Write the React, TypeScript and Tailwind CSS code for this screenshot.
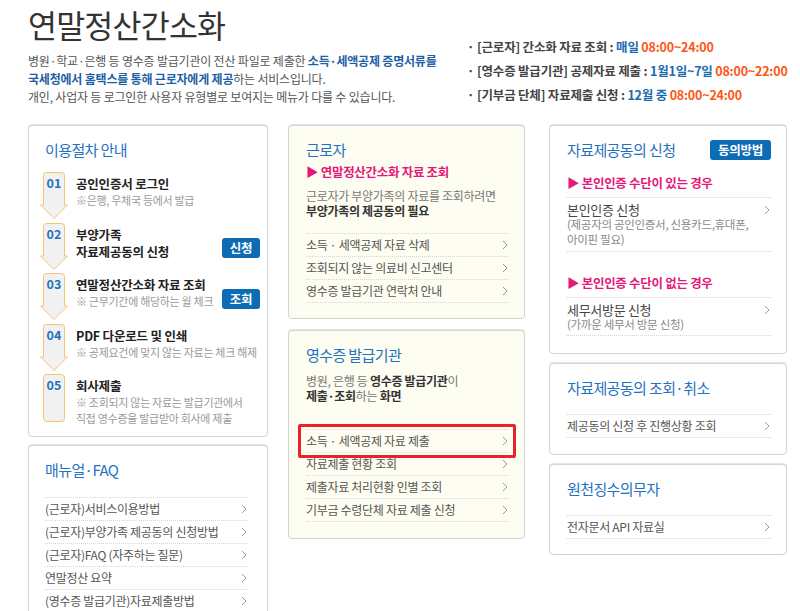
import React from "react";

const Chevron = () => (
  <svg width="6" height="10" viewBox="0 0 6 10" className="shrink-0">
    <path d="M1 1 L5 5 L1 9" fill="none" stroke="#9a9a9a" strokeWidth="1" />
  </svg>
);

function LinkList({ items, highlightFirst }: { items: string[]; highlightFirst?: boolean }) {
  return (
    <div className="border-b border-dotted border-[#d6d6d6]">
      {items.map((t, i) => (
        <div
          key={t}
          className="relative flex h-[23px] items-center justify-between border-t border-dotted border-[#d6d6d6] text-[12px] tracking-[-0.3px] text-[#555]"
        >
          <span className="whitespace-nowrap">{t}</span>
          <span className="mr-[1px]">
            <Chevron />
          </span>
          {highlightFirst && i === 0 && (
            <div className="pointer-events-none absolute -left-[8px] -right-[7px] -top-[6px] -bottom-[6px] rounded-[2px] border-[3px] border-[#e8232b]" />
          )}
        </div>
      ))}
    </div>
  );
}

const Title = ({ children }: { children: React.ReactNode }) => (
  <h2 className="whitespace-nowrap text-[15px] leading-[24px] tracking-[-0.6px] text-[#1f72bf]">{children}</h2>
);

const Badge = ({ children, w }: { children: React.ReactNode; w: string }) => (
  <span
    className={`${w} inline-block h-[20px] rounded-[3px] bg-[#0c6cb6] text-center text-[12.5px] font-bold leading-[20px] tracking-[-0.3px] text-white`}
  >
    {children}
  </span>
);

type Step = { n: string; title: string[]; sub: string[]; badge?: string; last?: boolean };

const steps: Step[] = [
  { n: "01", title: ["공인인증서 로그인"], sub: ["※은행, 우체국 등에서 발급"] },
  { n: "02", title: ["부양가족", "자료제공동의 신청"], sub: [], badge: "신청" },
  { n: "03", title: ["연말정산간소화 자료 조회"], sub: ["※ 근무기간에 해당하는 월 체크"], badge: "조회" },
  { n: "04", title: ["PDF 다운로드 및 인쇄"], sub: ["※ 공제요건에 맞지 않는 자료는 체크 해제"] },
  {
    n: "05",
    title: ["회사제출"],
    sub: ["※ 조회되지 않는 자료는 발급기관에서", "직접 영수증을 발급받아 회사에 제출"],
    last: true,
  },
];

function StepRow({ s }: { s: Step }) {
  return (
    <div className={`flex ${s.last ? "" : "h-[50.5px]"}`}>
      <div className={`relative ml-[-5px] w-[28px] shrink-0 ${s.last ? "h-[48px]" : "h-[47px]"}`}>
        {s.last ? (
          <svg width="28" height="48" viewBox="0 0 28 48" className="absolute left-0 top-0">
            <rect x="3.5" y="0.5" width="21" height="47" rx="3" fill="#f1f1f1" stroke="#f6c172" strokeWidth="1" />
          </svg>
        ) : (
          <svg width="28" height="47" viewBox="0 0 28 47" className="absolute left-0 top-0">
            <path
              d="M3.5 3.5 Q3.5 0.5 6.5 0.5 L21.5 0.5 Q24.5 0.5 24.5 3.5 L24.5 33 L27.5 33 L14 46.5 L0.5 33 L3.5 33 Z"
              fill="#f1f1f1"
              stroke="#f6c172"
              strokeWidth="1"
            />
          </svg>
        )}
        <span className="absolute left-0 top-[3px] w-[28px] text-center text-[12.5px] font-bold leading-[16px] text-[#1f72bf]">
          {s.n}
        </span>
      </div>
      <div className="ml-[8px] pt-[3px]">
        {s.title.map((t) => (
          <div key={t} className="whitespace-nowrap text-[12.5px] font-bold leading-[17px] tracking-[-0.2px] text-[#222]">
            {t}
          </div>
        ))}
        {s.sub.map((t) => (
          <div key={t} className="whitespace-nowrap text-[11px] leading-[16px] tracking-[-0.3px] text-[#9a9a9a]">
            {t}
          </div>
        ))}
      </div>
      {s.badge && (
        <div className="ml-auto mb-[3px] self-center">
          <Badge w="w-[38px]">{s.badge}</Badge>
        </div>
      )}
    </div>
  );
}

const panel = "rounded-[4px] border border-[#d4d4d4] shadow-[0_-1px_0_#e6e6e6]";
const pink = "whitespace-nowrap text-[12.5px] font-bold leading-[18px] tracking-[-0.3px] text-[#e5177b]";
const desc = "whitespace-nowrap text-[12px] leading-[14.5px] tracking-[-0.3px] text-[#777]";

export default function App() {
  return (
    <div className="h-[611px] w-full overflow-hidden bg-white font-['Noto_Sans_CJK_KR','Noto_Sans',sans-serif]">
      {/* Header */}
      <div className="flex h-[125px] pl-[28px]">
        <div className="w-[439px] shrink-0">
          <h1 className="text-[31.5px] font-normal leading-[48px] tracking-[-0.8px] text-[#333]">연말정산간소화</h1>
          <p className="mt-[4px] whitespace-nowrap text-[12px] leading-[18px] tracking-[-0.2px] text-[#555]">
            병원·학교·은행 등 영수증 발급기관이 전산 파일로 제출한{" "}
            <b className="text-[#1f5fa5]">소득·세액공제 증명서류를</b>
            <br />
            <b className="text-[#1f5fa5]">국세청에서 홈택스를 통해 근로자에게 제공</b>하는 서비스입니다.
            <br />
            개인, 사업자 등 로그인한 사용자 유형별로 보여지는 메뉴가 다를 수 있습니다.
          </p>
        </div>
        <div className="whitespace-nowrap pt-[35px] text-[12.5px] font-bold leading-[24px] tracking-[-0.2px] text-[#444]">
          <div className="flex">
            <span className="w-[10px]">·</span>
            <span>
              [근로자] 간소화 자료 조회 : <span className="text-[#1a6bb0]">매일</span>{" "}
              <span className="text-[#ff5514]">08:00~24:00</span>
            </span>
          </div>
          <div className="flex">
            <span className="w-[10px]">·</span>
            <span>
              [영수증 발급기관] 공제자료 제출 : <span className="text-[#1a6bb0]">1월1일~7일</span>{" "}
              <span className="text-[#ff5514]">08:00~22:00</span>
            </span>
          </div>
          <div className="flex">
            <span className="w-[10px]">·</span>
            <span>
              [기부금 단체] 자료제출 신청 : <span className="text-[#1a6bb0]">12월 중</span>{" "}
              <span className="text-[#ff5514]">08:00~24:00</span>
            </span>
          </div>
        </div>
      </div>

      {/* Columns */}
      <div className="flex items-start pl-[28px]">
        {/* Left column */}
        <div className="flex w-[240px] shrink-0 flex-col gap-[8px]">
          <div className={`${panel} h-[312px] bg-white px-[16px] pt-[12px]`}>
            <Title>이용절차 안내</Title>
            <div className="mr-[-9px] mt-[10px]">
              {steps.map((s) => (
                <StepRow key={s.n} s={s} />
              ))}
            </div>
          </div>
          <div className={`${panel} h-[200px] bg-white pl-[16px] pr-[19px] pt-[12px]`}>
            <Title>매뉴얼·FAQ</Title>
            <div className="mt-[15px]">
              <LinkList
                items={[
                  "(근로자)서비스이용방법",
                  "(근로자)부양가족 제공동의 신청방법",
                  "(근로자)FAQ (자주하는 질문)",
                  "연말정산 요약",
                  "(영수증 발급기관)자료제출방법",
                ]}
              />
            </div>
          </div>
        </div>

        {/* Middle column */}
        <div className="ml-[20px] flex w-[237px] shrink-0 flex-col gap-[11px]">
          <div className={`${panel} h-[194px] bg-[#fdfdf1] pl-[17px] pr-[15px] pt-[12px]`}>
            <Title>근로자</Title>
            <div className={`mt-[1px] ${pink}`}>▶ 연말정산간소화 자료 조회</div>
            <p className={`mt-[8px] ${desc}`}>
              근로자가 부양가족의 자료를 조회하려면
              <br />
              <b className="text-[#333]">부양가족의 제공동의 필요</b>
            </p>
            <div className="mt-[15px]">
              <LinkList items={["소득 · 세액공제 자료 삭제", "조회되지 않는 의료비 신고센터", "영수증 발급기관 연락처 안내"]} />
            </div>
          </div>
          <div className={`${panel} h-[209px] bg-[#fdfdf1] pl-[17px] pr-[15px] pt-[12px]`}>
            <Title>영수증 발급기관</Title>
            <p className={`mt-[7px] ${desc}`}>
              병원, 은행 등 <b className="text-[#333]">영수증 발급기관</b>이
              <br />
              <b className="text-[#333]">제출·조회</b>하는 <b className="text-[#333]">화면</b>
            </p>
            <div className="mt-[26px]">
              <LinkList
                highlightFirst
                items={["소득 · 세액공제 자료 제출", "자료제출 현황 조회", "제출자료 처리현황 인별 조회", "기부금 수령단체 자료 제출 신청"]}
              />
            </div>
          </div>
        </div>

        {/* Right column */}
        <div className="ml-[24px] flex w-[238px] shrink-0 flex-col gap-[9px]">
          <div className={`${panel} h-[229px] bg-white pl-[17px] pr-[15px] pt-[12px]`}>
            <div className="flex h-[24px] items-center justify-between">
              <Title>자료제공동의 신청</Title>
              <Badge w="w-[61px]">동의방법</Badge>
            </div>
            <div className={`mt-[12px] ${pink}`}>▶ 본인인증 수단이 있는 경우</div>
            <div className="relative mt-[5px] border-y border-dotted border-[#d6d6d6] pb-[4px] pt-[4px]">
              <div className="text-[13px] leading-[15px] tracking-[-0.3px] text-[#444]">본인인증 신청</div>
              <div className="whitespace-nowrap text-[11.5px] leading-[15px] tracking-[-0.3px] text-[#888]">
                (제공자의 공인인증서, 신용카드,휴대폰,
                <br />
                아이핀 필요)
              </div>
              <span className="absolute right-[1px] top-[7px]">
                <Chevron />
              </span>
            </div>
            <div className={`mt-[22px] ${pink}`}>▶ 본인인증 수단이 없는 경우</div>
            <div className="relative mt-[5px] border-y border-dotted border-[#d6d6d6] pb-[3px] pt-[4px]">
              <div className="text-[13px] leading-[15px] tracking-[-0.3px] text-[#444]">세무서방문 신청</div>
              <div className="whitespace-nowrap text-[11.5px] leading-[15px] tracking-[-0.3px] text-[#888]">
                (가까운 세무서 방문 신청)
              </div>
              <span className="absolute right-[1px] top-[7px]">
                <Chevron />
              </span>
            </div>
          </div>
          <div className={`${panel} h-[92px] bg-white pl-[17px] pr-[15px] pt-[12px]`}>
            <Title>자료제공동의 조회·취소</Title>
            <div className="mt-[14px]">
              <LinkList items={["제공동의 신청 후 진행상황 조회"]} />
            </div>
          </div>
          <div className={`${panel} h-[91px] bg-white pl-[17px] pr-[15px] pt-[12px]`}>
            <Title>원천징수의무자</Title>
            <div className="mt-[14px]">
              <LinkList items={["전자문서 API 자료실"]} />
            </div>
          </div>
        </div>
      </div>
    </div>
  );
}
